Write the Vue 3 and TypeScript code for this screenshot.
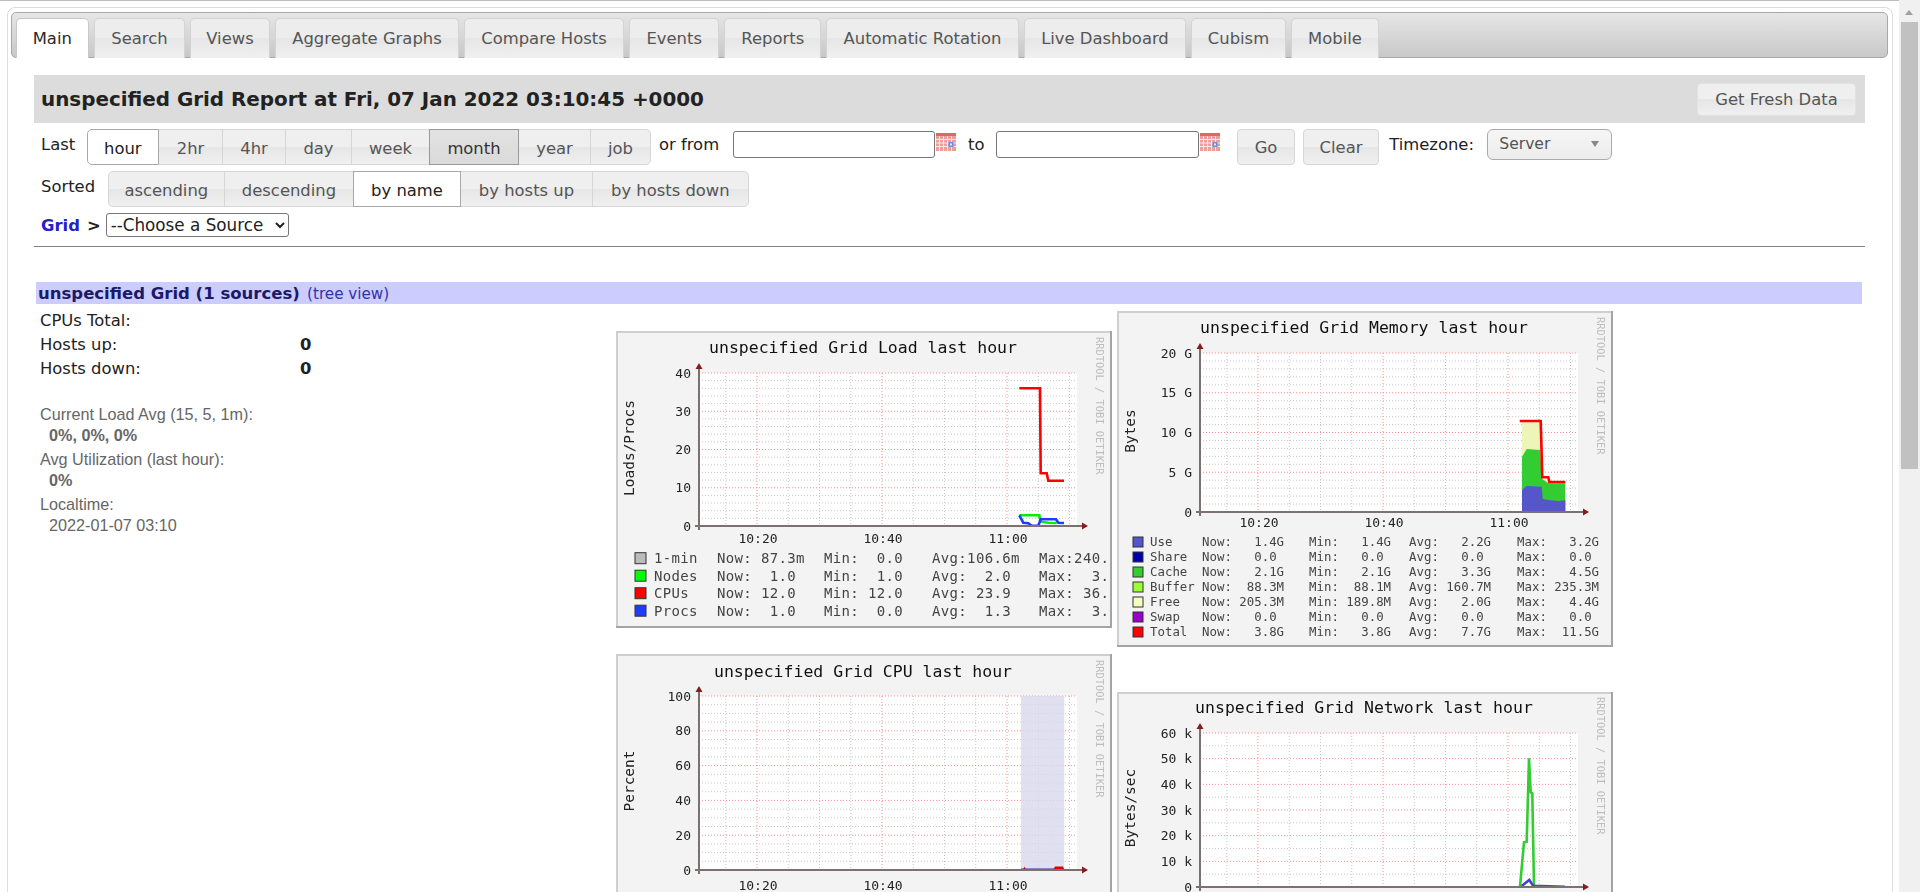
<script setup lang="ts">
interface Tab { label: string; w: number; active?: boolean }
interface Btn { label: string; w: number; state?: 'on' | 'pressed' }
interface LegendRow { color: string; name: string; cols: string[] }
interface Legend { swatchX: number; swatchTop: number; swatchSize: number; nameX: number; colX: number[]; base: number; dy: number; font: number; spacing: number; rows: LegendRow[] }
interface Shape { kind: 'line' | 'area'; color: string; points: string; width?: number; opacity?: number }
interface Graph { key: string; height: number; title: string; titleY: number; yLabel: string; yLabelY: number; top: number; bottom: number; ticks: string[]; minorDiv: number; labelY: number; vendorY: number; shapes: Shape[]; legend?: Legend }

const tabs: Tab[] = [
  { label: 'Main', w: 73.4, active: true }, { label: 'Search', w: 91 }, { label: 'Views', w: 80 },
  { label: 'Aggregate Graphs', w: 184 }, { label: 'Compare Hosts', w: 160 }, { label: 'Events', w: 90.5 },
  { label: 'Reports', w: 96.5 }, { label: 'Automatic Rotation', w: 193 }, { label: 'Live Dashboard', w: 162 },
  { label: 'Cubism', w: 95 }, { label: 'Mobile', w: 88 },
]
const ranges: Btn[] = [
  { label: 'hour', w: 72.4, state: 'on' }, { label: '2hr', w: 65 }, { label: '4hr', w: 64 }, { label: 'day', w: 67 },
  { label: 'week', w: 79 }, { label: 'month', w: 90, state: 'pressed' }, { label: 'year', w: 73 }, { label: 'job', w: 61 },
]
const sorts: Btn[] = [
  { label: 'ascending', w: 117.4 }, { label: 'descending', w: 130 }, { label: 'by name', w: 108, state: 'on' },
  { label: 'by hosts up', w: 133 }, { label: 'by hosts down', w: 156.7 },
]

const graphs: Graph[] = [
  {
    key: 'load', height: 297, title: 'unspecified Grid Load last hour', titleY: 22, yLabel: 'Loads/Procs', yLabelY: 117,
    top: 42, bottom: 195, ticks: ['40', '30', '20', '10', '0'], minorDiv: 5, labelY: 212, vendorY: 6,
    shapes: [
      { kind: 'line', color: '#ff0000', points: '403.3,57.3 424,57.3 424.7,142.3 430.7,142.3 432.3,149.7 448,149.7' },
      { kind: 'line', color: '#00ee00', points: '403.3,184.3 423.3,184.3 424.7,190.7 432.3,191.7 440.7,192' },
      { kind: 'line', color: '#1e3cff', points: '403.3,184.3 407.3,191.7 412.3,192.3 415.7,194.7 422.3,194.7 424.7,188.3 440,188.3 442.3,191.7 448,192' },
    ],
    legend: {
      swatchX: 19, swatchTop: 221.7, swatchSize: 11, nameX: 38, colX: [101, 208, 316, 423], base: 232, dy: 17.5, font: 14, spacing: 0.35,
      rows: [
        { color: '#bbbbbb', name: '1-min', cols: ['Now: 87.3m', 'Min:  0.0', 'Avg:106.6m', 'Max:240.0m'] },
        { color: '#00ff00', name: 'Nodes', cols: ['Now:  1.0', 'Min:  1.0', 'Avg:  2.0', 'Max:  3.0'] },
        { color: '#ff0000', name: 'CPUs', cols: ['Now: 12.0', 'Min: 12.0', 'Avg: 23.9', 'Max: 36.0'] },
        { color: '#1e3cff', name: 'Procs', cols: ['Now:  1.0', 'Min:  0.0', 'Avg:  1.3', 'Max:  3.0'] },
      ],
    },
  },
  {
    key: 'mem', height: 336, title: 'unspecified Grid Memory last hour', titleY: 22, yLabel: 'Bytes', yLabelY: 120,
    top: 42, bottom: 201, ticks: ['20 G', '15 G', '10 G', '5 G', '0'], minorDiv: 5, labelY: 216, vendorY: 6,
    shapes: [
      { kind: 'area', color: '#eef5b8', points: '405,110 423,110 425.3,166.3 431.3,170.7 448.3,170.7 448.3,201 405,201' },
      { kind: 'area', color: '#33cc33', points: '405,145.7 409.7,138 423,139 425.3,168 431.3,172.3 448.3,172.3 448.3,201 405,201' },
      { kind: 'area', color: '#5555cc', points: '405,179 409.7,175 424.7,175.7 425.7,188 433,189.3 441.3,190 448.3,189.3 448.3,201 405,201' },
      { kind: 'line', color: '#ff0000', points: '402.7,110 423.7,110 425.3,166.3 431.3,166.3 432.3,171 448.3,171' },
    ],
    legend: {
      swatchX: 16, swatchTop: 226, swatchSize: 10, nameX: 33, colX: [85, 192, 292, 400], base: 235, dy: 15, font: 12.4, spacing: 0,
      rows: [
        { color: '#5555cc', name: 'Use', cols: ['Now:   1.4G', 'Min:   1.4G', 'Avg:   2.2G', 'Max:   3.2G'] },
        { color: '#0000aa', name: 'Share', cols: ['Now:   0.0', 'Min:   0.0', 'Avg:   0.0', 'Max:   0.0'] },
        { color: '#33cc33', name: 'Cache', cols: ['Now:   2.1G', 'Min:   2.1G', 'Avg:   3.3G', 'Max:   4.5G'] },
        { color: '#99ff33', name: 'Buffer', cols: ['Now:  88.3M', 'Min:  88.1M', 'Avg: 160.7M', 'Max: 235.3M'] },
        { color: '#f0ffc0', name: 'Free', cols: ['Now: 205.3M', 'Min: 189.8M', 'Avg:   2.0G', 'Max:   4.4G'] },
        { color: '#9900cc', name: 'Swap', cols: ['Now:   0.0', 'Min:   0.0', 'Avg:   0.0', 'Max:   0.0'] },
        { color: '#ff0000', name: 'Total', cols: ['Now:   3.8G', 'Min:   3.8G', 'Avg:   7.7G', 'Max:  11.5G'] },
      ],
    },
  },
  {
    key: 'cpu', height: 375, title: 'unspecified Grid CPU last hour', titleY: 23, yLabel: 'Percent', yLabelY: 127,
    top: 42, bottom: 216, ticks: ['100', '80', '60', '40', '20', '0'], minorDiv: 4, labelY: 236, vendorY: 6,
    shapes: [
      { kind: 'area', color: '#d8d8ee', opacity: 0.8, points: '405,42 448.3,42 448.3,216 405,216' },
      { kind: 'line', color: '#6666bb', points: '405,215.5 448,215.5' },
      { kind: 'area', color: '#dd0000', points: '407,216 408.5,212.5 410,216' },
      { kind: 'area', color: '#dd0000', points: '437,216 439,212.5 447,212.5 448.3,216' },
    ],
  },
  {
    key: 'net', height: 300, title: 'unspecified Grid Network last hour', titleY: 21, yLabel: 'Bytes/sec', yLabelY: 116,
    top: 41, bottom: 195, ticks: ['60 k', '50 k', '40 k', '30 k', '20 k', '10 k', '0'], minorDiv: 2, labelY: 212, vendorY: 5,
    shapes: [
      { kind: 'line', color: '#33cc33', points: '403,194.7 407,150.3 409.7,149.7 412,66.3 413.7,100.3 415.3,101.3 417,194.7 424.7,194.7' },
      { kind: 'line', color: '#4444cc', points: '404.7,194 412.3,188 416.3,194 424.7,194 448,194.7' },
    ],
  },
]

const plotLeft = 83
const plotRight = 461
const majorX = [141, 266, 391]
const xLabels = ['10:20', '10:40', '11:00']
const minorX: number[] = []
for (let x = 109.75; x < plotRight; x += 31.25) {
  if (!majorX.includes(Math.round(x))) minorX.push(x)
}

function tickY(g: Graph, i: number): number {
  return g.top + ((g.bottom - g.top) * i) / (g.ticks.length - 1)
}
function minorY(g: Graph): number[] {
  const step = (g.bottom - g.top) / (g.ticks.length - 1)
  const out: number[] = []
  for (let i = 0; i < g.ticks.length - 1; i++) {
    for (let j = 1; j < g.minorDiv; j++) out.push(g.top + step * i + (step * j) / g.minorDiv)
  }
  return out
}
</script>

<template>
  <div class="screen">
    <div class="page">
      <div class="panel">
        <nav class="tabbar">
          <a v-for="t in tabs" :key="t.label" class="tab" :class="{ active: t.active }" :style="{ width: t.w + 'px' }">{{ t.label }}</a>
        </nav>

        <div class="content">
          <header class="report-head">
            <h1>unspecified Grid Report at Fri, 07 Jan 2022 03:10:45 +0000</h1>
            <button class="btn fresh">Get Fresh Data</button>
          </header>

          <div class="row">
            <span class="lbl lbl-last">Last</span>
            <div class="group">
              <span v-for="b in ranges" :key="b.label" class="seg" :class="b.state" :style="{ width: b.w + 'px' }">{{ b.label }}</span>
            </div>
            <span class="lbl lbl-from">or from</span>
            <input class="date" type="text" />
            <svg class="cal" width="20" height="18" viewBox="0 0 20 18">
              <rect width="20" height="18" fill="#ee9c9c" />
              <rect width="20" height="3" fill="#d86a6a" />
              <path d="M0 6.5H20M0 10H20M0 13.5H20M3.5 3V18M7.5 3V18M11.5 3V18M15.5 3V18" stroke="#fbe6e6" stroke-width="1" />
              <rect x="12.5" y="9" width="5" height="5" fill="#6f8fdc" />
              <rect x="14" y="10.5" width="2" height="2" fill="#dce6ff" />
            </svg>
            <span class="lbl lbl-to">to</span>
            <input class="date" type="text" />
            <svg class="cal" width="20" height="18" viewBox="0 0 20 18">
              <rect width="20" height="18" fill="#ee9c9c" />
              <rect width="20" height="3" fill="#d86a6a" />
              <path d="M0 6.5H20M0 10H20M0 13.5H20M3.5 3V18M7.5 3V18M11.5 3V18M15.5 3V18" stroke="#fbe6e6" stroke-width="1" />
              <rect x="12.5" y="9" width="5" height="5" fill="#6f8fdc" />
              <rect x="14" y="10.5" width="2" height="2" fill="#dce6ff" />
            </svg>
            <button class="btn go">Go</button>
            <button class="btn clear">Clear</button>
            <span class="lbl lbl-tz">Timezone:</span>
            <div class="tz">
              <span>Server</span>
              <i class="tz-arrow"></i>
            </div>
          </div>

          <div class="row">
            <span class="lbl lbl-sorted">Sorted</span>
            <div class="group">
              <span v-for="b in sorts" :key="b.label" class="seg" :class="b.state" :style="{ width: b.w + 'px' }">{{ b.label }}</span>
            </div>
          </div>

          <div class="crumb">
            <a class="crumb-link">Grid</a>
            <b class="crumb-gt">&gt;</b>
            <select class="source">
              <option>--Choose a Source</option>
            </select>
          </div>

          <hr class="rule" />

          <section class="grid-section">
            <div class="section-title"><b>unspecified Grid (1 sources)</b> <a>(tree view)</a></div>
            <div class="section-body">
              <aside class="info">
                <dl class="counts">
                  <dt>CPUs Total:</dt><dd></dd>
                  <dt>Hosts up:</dt><dd>0</dd>
                  <dt>Hosts down:</dt><dd>0</dd>
                </dl>
                <div class="meta">
                  <div>Current Load Avg (15, 5, 1m):</div>
                  <strong>0%, 0%, 0%</strong>
                  <div class="next">Avg Utilization (last hour):</div>
                  <strong>0%</strong>
                  <div class="next">Localtime:</div>
                  <span class="val">2022-01-07 03:10</span>
                </div>
              </aside>

              <div class="graphs">
                <svg v-for="g in graphs" :key="g.key" class="graph" width="496" :height="g.height" :viewBox="`0 0 496 ${g.height}`">
                  <rect width="496" :height="g.height" fill="#f3f3f3" />
                  <rect :x="plotLeft" :y="g.top" :width="plotRight - plotLeft" :height="g.bottom - g.top" fill="#fff" />

                  <line v-for="y in minorY(g)" :key="'hm' + y" :x1="plotLeft" :x2="plotRight" :y1="y" :y2="y" class="minor" />
                  <line v-for="x in minorX" :key="'vm' + x" :x1="x" :x2="x" :y1="g.top" :y2="g.bottom" class="minor" />
                  <line v-for="(t, i) in g.ticks" :key="'hM' + i" :x1="plotLeft" :x2="plotRight" :y1="tickY(g, i)" :y2="tickY(g, i)" class="major" />
                  <line v-for="x in majorX" :key="'vM' + x" :x1="x" :x2="x" :y1="g.top" :y2="g.bottom" class="major" />

                  <template v-for="(s, si) in g.shapes" :key="si">
                    <polygon v-if="s.kind === 'area'" :points="s.points" :fill="s.color" :fill-opacity="s.opacity ?? 1" />
                    <polyline v-else :points="s.points" fill="none" :stroke="s.color" stroke-width="2.6" />
                  </template>

                  <line :x1="plotLeft" :x2="plotLeft" :y1="g.top - 6" :y2="g.bottom + 4" class="axis" />
                  <line :x1="plotLeft - 4" :x2="plotRight + 6" :y1="g.bottom" :y2="g.bottom" class="axis" />
                  <polygon :points="`${plotLeft - 3.5},${g.top - 4} ${plotLeft + 3.5},${g.top - 4} ${plotLeft},${g.top - 10}`" fill="#8b1a1a" />
                  <polygon :points="`${plotRight + 5},${g.bottom - 3.5} ${plotRight + 5},${g.bottom + 3.5} ${plotRight + 11},${g.bottom}`" fill="#8b1a1a" />

                  <text x="247" :y="g.titleY" class="g-title">{{ g.title }}</text>
                  <text v-for="(t, i) in g.ticks" :key="'t' + i" x="75" :y="tickY(g, i) + 4.5" class="g-tick g-end">{{ t }}</text>
                  <text v-for="(t, i) in xLabels" :key="t" :x="majorX[i] + 1" :y="g.labelY" class="g-tick g-mid">{{ t }}</text>
                  <text :transform="`translate(18 ${g.yLabelY}) rotate(-90)`" class="g-ylabel">{{ g.yLabel }}</text>
                  <text :transform="`translate(480 ${g.vendorY}) rotate(90)`" class="g-vendor">RRDTOOL / TOBI OETIKER</text>

                  <template v-if="g.legend">
                    <g v-for="(r, ri) in g.legend.rows" :key="r.name">
                      <rect :x="g.legend.swatchX" :y="g.legend.swatchTop + ri * g.legend.dy" :width="g.legend.swatchSize" :height="g.legend.swatchSize" :fill="r.color" stroke="#333" stroke-width="1" />
                      <text :x="g.legend.nameX" :y="g.legend.base + ri * g.legend.dy" class="g-legend" :style="{ fontSize: g.legend.font + 'px', letterSpacing: g.legend.spacing + 'px' }">{{ r.name }}</text>
                      <text v-for="(c, ci) in r.cols" :key="ci" :x="g.legend.colX[ci]" :y="g.legend.base + ri * g.legend.dy" class="g-legend" :style="{ fontSize: g.legend.font + 'px', letterSpacing: g.legend.spacing + 'px' }">{{ c }}</text>
                    </g>
                  </template>

                  <path :d="`M0 ${g.height}V0H496`" fill="none" stroke="#cfcfcf" stroke-width="4" />
                  <path :d="`M496 0V${g.height}H0`" fill="none" stroke="#a4a4a4" stroke-width="4" />
                </svg>
              </div>
            </div>
          </section>
        </div>
      </div>
    </div>

    <div class="scrollbar">
      <i class="scroll-up"></i>
      <div class="thumb"></div>
    </div>
  </div>
</template>

<style>
html, body { margin: 0; overflow: hidden; background: #fff; }
</style>

<style scoped>
.screen {
  display: flex;
  width: 1920px;
  height: 892px;
  overflow: hidden;
  font-family: "DejaVu Sans", Verdana, sans-serif;
  font-size: 16.4px;
  color: #222;
  background: #fff;
}
.page {
  flex: 0 0 1899px;
  width: 1899px;
  border-top: 1px solid #bdbdbd;
  padding: 6px 6px 0 6.5px;
  box-sizing: border-box;
}
.panel {
  height: 900px;
  box-sizing: border-box;
  border: 1px solid #ddd;
  border-radius: 8px 8px 0 0;
  padding: 4px 4px 0 3.5px;
}
.tabbar {
  display: flex;
  gap: 5px;
  height: 46px;
  box-sizing: border-box;
  padding: 5px 0 0 3.6px;
  border: 1px solid #a8a8a8;
  border-radius: 5px;
  background: linear-gradient(#e6e6e6, #c8c8c8);
}
.tab {
  box-sizing: border-box;
  height: 40px;
  line-height: 39px;
  text-align: center;
  color: #555;
  background: linear-gradient(#ededed 50%, #e6e6e6 50%, #f0f0f0);
  border: 1px solid #d3d3d3;
  border-bottom: 0;
  border-radius: 5px 5px 0 0;
}
.tab.active {
  color: #2a2a2a;
  background: #fff;
  border-color: #c8c8c8;
}
.content { padding: 17px 23px 0 23px; }
.report-head {
  display: flex;
  align-items: center;
  justify-content: space-between;
  height: 48px;
  padding: 0 9px 0 7px;
  background: #dcdcdc;
}
.report-head h1 {
  margin: 0;
  font-size: 19.9px;
  font-weight: 700;
  color: #222;
}
.btn {
  box-sizing: border-box;
  font: inherit;
  color: #555;
  padding: 0;
  border: 1px solid #d6d6d6;
  border-radius: 4px;
  background: linear-gradient(#efefef 50%, #e6e6e6 50%, #f0f0f0);
}
.fresh { width: 159px; height: 33px; border-color: #e2e2e2; }
.row {
  display: flex;
  align-items: flex-start;
  height: 36px;
  margin-top: 6px;
  padding-left: 7px;
}
.lbl { line-height: 32px; white-space: nowrap; color: #222; }
.lbl-last { width: 45.6px; }
.lbl-from { width: 73.6px; margin-left: 8px; }
.lbl-to { width: 28.4px; margin-left: 12px; }
.lbl-tz { width: 98px; margin-left: 10px; line-height: 31px; }
.lbl-sorted { width: 66.6px; }
.group { display: flex; }
.seg {
  box-sizing: border-box;
  height: 36px;
  line-height: 37px;
  text-align: center;
  color: #555;
  margin-left: -1px;
  border: 1px solid #d6d6d6;
  background: linear-gradient(#efefef 50%, #e6e6e6 50%, #f0f0f0);
}
.seg:first-child { margin-left: 0; border-radius: 5px 0 0 5px; }
.seg:last-child { border-radius: 0 5px 5px 0; }
.seg.on { background: #fff; color: #222; border-color: #a8a8a8; position: relative; }
.seg.pressed { background: linear-gradient(#e2e2e2, #dadada); color: #333; border-color: #999; position: relative; }
.date {
  box-sizing: border-box;
  width: 202.4px;
  height: 27px;
  margin: 2px 0 0;
  padding: 0 4px;
  border: 1px solid #767676;
  border-radius: 3px;
  background: #fff;
}
.cal { margin: 4px 0 0 1px; flex: none; }
.go { width: 58.5px; height: 36px; margin-left: 17px; }
.clear { width: 76.4px; height: 36px; margin-left: 7.6px; }
.tz {
  box-sizing: border-box;
  display: flex;
  align-items: center;
  justify-content: space-between;
  width: 125px;
  height: 31px;
  padding: 0 12px 2px 11px;
  font-size: 15.6px;
  color: #555;
  border: 1px solid #aaa;
  border-radius: 6px;
  background: linear-gradient(#f6f6f6, #ececec);
}
.tz-arrow {
  width: 0;
  height: 0;
  border-left: 4px solid transparent;
  border-right: 4px solid transparent;
  border-top: 6px solid #888;
}
.crumb {
  display: flex;
  align-items: center;
  height: 24px;
  margin-top: 6px;
  padding-left: 7px;
}
.crumb-link { font-weight: 700; color: #2222cc; }
.crumb-gt { margin-left: 7px; }
.source {
  box-sizing: border-box;
  width: 183px;
  height: 24px;
  margin-left: 5px;
  font: 16.8px "DejaVu Sans", sans-serif;
  color: #222;
  background: #fff;
  border: 1px solid #767676;
  border-radius: 3px;
}
.rule { margin: 9px 0 0; border: 0; border-top: 1px solid #808080; }
.grid-section { margin: 35px 3px 0 2px; }
.section-title {
  height: 22px;
  line-height: 24px;
  padding-left: 2px;
  background: #ccccff;
  font-size: 16.5px;
  color: #1a1a66;
  white-space: nowrap;
}
.section-title a { font-size: 15.2px; color: #3333aa; margin-left: 2px; }
.section-body { display: flex; align-items: flex-start; }
.info { flex: 0 0 580px; box-sizing: border-box; padding: 5px 0 0 4px; }
.counts {
  display: grid;
  grid-template-columns: 260px 1fr;
  grid-auto-rows: 24px;
  margin: 0;
  line-height: 24px;
}
.counts dd { margin: 0; font-weight: 700; }
.meta {
  margin-top: 23px;
  font-family: "Liberation Sans", Arial, sans-serif;
  font-size: 16.2px;
  line-height: 21px;
  color: #666;
}
.meta .next { margin-top: 3px; }
.meta strong, .meta .val { display: block; padding-left: 9px; }
.graphs {
  flex: none;
  display: grid;
  grid-template-columns: 496px 496px;
  column-gap: 5px;
  row-gap: 7px;
  align-items: center;
  margin-top: 7px;
}
.graph { display: block; filter: blur(0.5px); }
.minor { stroke: #c8c8c8; stroke-width: 1; stroke-dasharray: 1 2; }
.major { stroke: #ff8c8c; stroke-width: 1; stroke-dasharray: 1 2; }
.axis { stroke: #7c7070; stroke-width: 2; }
text { font-family: "DejaVu Sans Mono", monospace; white-space: pre; }
.g-title { font-size: 16.5px; fill: #111; text-anchor: middle; }
.g-tick { font-size: 13px; fill: #222; }
.g-end { text-anchor: end; }
.g-mid { text-anchor: middle; }
.g-ylabel { font-size: 14.5px; fill: #222; text-anchor: middle; }
.g-vendor { font-size: 10.4px; fill: #bdbdbd; }
.g-legend { fill: #444; }
.scrollbar {
  flex: 1;
  position: relative;
  background: #f0f0f0;
}
.scroll-up {
  position: absolute;
  left: 6px;
  top: 10px;
  width: 0;
  height: 0;
  border-left: 4.5px solid transparent;
  border-right: 4.5px solid transparent;
  border-bottom: 5px solid #a0a0a0;
}
.thumb {
  position: absolute;
  left: 2px;
  top: 22px;
  width: 17px;
  height: 447px;
  background: #c1c1c1;
}
</style>
